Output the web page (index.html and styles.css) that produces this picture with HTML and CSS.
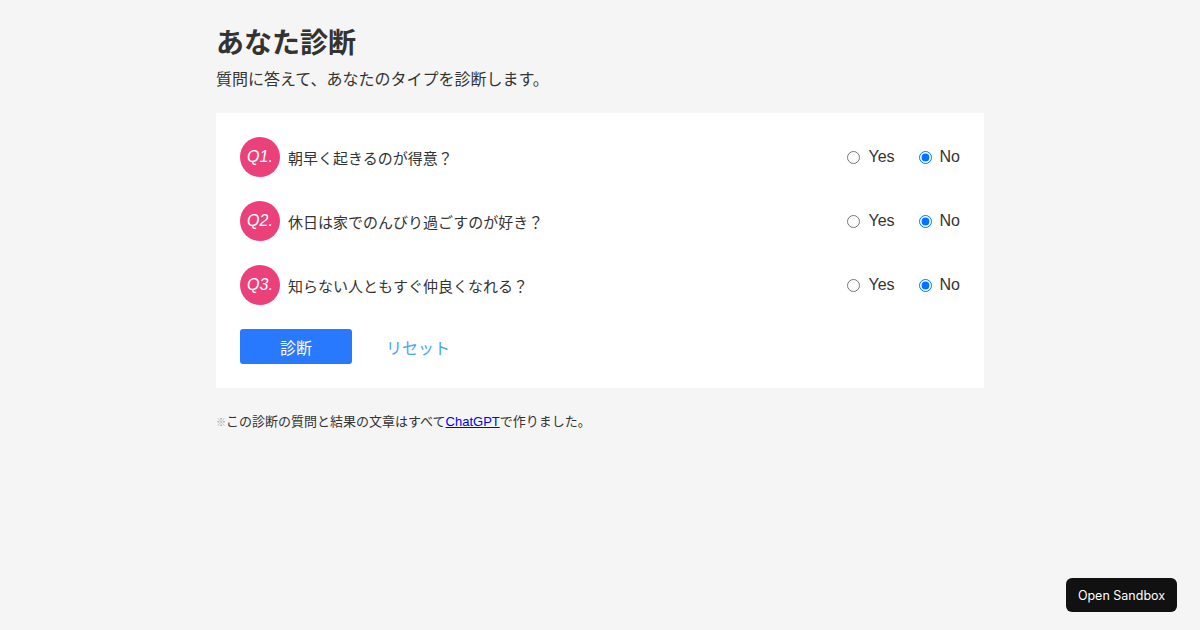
FILE: index.html
```html
<!DOCTYPE html>
<html lang="ja">
  <head>
    <meta charset="UTF-8" />
    <meta name="viewport" content="width=device-width, initial-scale=1.0" />
    <title>あなた診断</title>
    <link rel="stylesheet" href="styles.css">
  </head>
  <body>
    <div class="wrap">
      <h1 class="title">あなた診断</h1>
      <p class="lead">質問に答えて、あなたのタイプを診断します。</p>

      <form class="card">
        <div class="question">
          <span class="num">Q1.</span>
          <span class="text">朝早く起きるのが得意？</span>
          <div class="choices">
            <label><input type="radio" name="q1" value="yes" /> Yes</label>
            <label><input type="radio" name="q1" value="no" checked /> No</label>
          </div>
        </div>
        <div class="question">
          <span class="num">Q2.</span>
          <span class="text">休日は家でのんびり過ごすのが好き？</span>
          <div class="choices">
            <label><input type="radio" name="q2" value="yes" /> Yes</label>
            <label><input type="radio" name="q2" value="no" checked /> No</label>
          </div>
        </div>
        <div class="question">
          <span class="num">Q3.</span>
          <span class="text">知らない人ともすぐ仲良くなれる？</span>
          <div class="choices">
            <label><input type="radio" name="q3" value="yes" /> Yes</label>
            <label><input type="radio" name="q3" value="no" checked /> No</label>
          </div>
        </div>
        <div class="actions">
          <button type="button" class="submit">診断</button>
          <a href="#" class="reset">リセット</a>
        </div>
      </form>

      <p class="note">
        <span class="mark">※</span>この診断の質問と結果の文章はすべて<a href="#">ChatGPT</a>で作りました。
      </p>
    </div>

    <button class="sandbox">Open Sandbox</button>
  </body>
</html>
```

FILE: styles.css
```css
body {
  margin: 0;
  background-color: #f5f5f5;
  color: #333;
  font-family: "Liberation Sans", "Noto Sans CJK JP", sans-serif;
}
.wrap {
  width: 768px;
  margin: 0 auto;
  padding-top: 24px;
}
.title {
  margin: 0;
  font-size: 28px;
  line-height: 40px;
  font-weight: bold;
}
.lead {
  margin: 4px 0 0;
  font-size: 16px;
  line-height: 24px;
}
.card {
  margin-top: 21px;
  padding: 24px;
  background-color: #fff;
  display: flex;
  flex-direction: column;
  gap: 24px;
}
.question {
  display: flex;
  align-items: center;
  height: 40px;
}
.num {
  width: 40px;
  height: 40px;
  border-radius: 50%;
  background-color: #ec407a;
  color: #fff;
  font-style: italic;
  font-size: 16px;
  display: flex;
  align-items: center;
  justify-content: center;
  margin-right: 8px;
}
.text {
  flex: 1;
  font-size: 15px;
}
.choices {
  display: flex;
  gap: 24px;
  font-size: 16px;
}
.choices label {
  display: flex;
  align-items: center;
  gap: 8px;
}
.choices input {
  margin: 0;
  width: 13px;
  height: 13px;
}
.actions {
  display: flex;
  align-items: center;
  gap: 34px;
}
.submit {
  width: 112px;
  height: 35px;
  border: none;
  border-radius: 3px;
  background-color: #2979ff;
  color: #fff;
  font-family: inherit;
  font-size: 16px;
  cursor: pointer;
}
.reset {
  color: #4aa3f0;
  font-size: 16px;
  text-decoration: none;
}
.note {
  margin: 26px 0 0;
  font-size: 13px;
  line-height: 16px;
}
.note a {
  color: #00e;
  text-decoration: underline;
}
.mark {
  color: #999;
  font-size: 10px;
}
.sandbox {
  position: fixed;
  right: 23px;
  bottom: 18px;
  width: 111px;
  height: 34px;
  border: none;
  border-radius: 6px;
  background-color: #111;
  color: #fff;
  font-family: Inter, "Liberation Sans", sans-serif;
  font-size: 12.5px;
}
```
